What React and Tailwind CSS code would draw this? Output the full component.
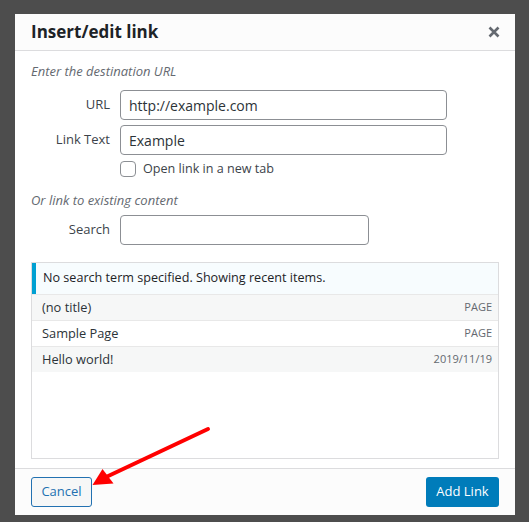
import React, { useState } from 'react'

const results = [
    { title: '(no title)', info: 'PAGE' },
    { title: 'Sample Page', info: 'PAGE' },
    { title: 'Hello world!', info: '2019/11/19' },
]

const Field = ({ label, value, width, onChange }) => (
    <div className="flex items-center h-[30px]">
        <label className="w-[79px] text-right text-[13px] text-[#3c434a]">{label}</label>
        <input
            type="text"
            value={value}
            onChange={(e) => onChange(e.target.value)}
            className={`ml-[10px] h-[30px] ${width} rounded-[4px] border border-[#8c8f94] bg-white px-[8px] text-[14px] text-[#2c3338] outline-none`}
        />
    </div>
)

const App = () => {
    const [url, setUrl] = useState('http://example.com')
    const [text, setText] = useState('Example')
    const [search, setSearch] = useState('')
    const [newTab, setNewTab] = useState(false)

    return (
        <div className="relative h-[522px] w-[529px] bg-[#4d4d4d] pl-[15px] pt-[14px] font-['Open_Sans',sans-serif]">
            <div className="flex h-[501px] w-[500px] flex-col bg-white">
                <div className="flex h-[37px] items-center justify-between border-b border-[#dcdcde] bg-[#fcfcfc] pl-[16px] pr-[13px]">
                    <h1 className="text-[17px] font-bold text-[#1d2327]">Insert/edit link</h1>
                    <button aria-label="Close" className="p-[2px]">
                        <svg width="12" height="12" viewBox="0 0 12 12">
                            <path d="M1.5 1.5 L10.5 10.5 M10.5 1.5 L1.5 10.5" stroke="#646970" strokeWidth="2.6" strokeLinecap="butt" />
                        </svg>
                    </button>
                </div>

                <div className="flex flex-1 flex-col px-[16px]">
                    <p className="mt-[10px] text-[13px] leading-[20px] italic text-[#646970]">Enter the destination URL</p>
                    <div className="mt-[9px]">
                        <Field label="URL" value={url} width="w-[327px]" onChange={setUrl} />
                    </div>
                    <div className="mt-[5px]">
                        <Field label="Link Text" value={text} width="w-[327px]" onChange={setText} />
                    </div>
                    <label className="mt-[6px] ml-[89px] flex h-[16px] items-center text-[12.6px] text-[#3c434a]">
                        <input
                            type="checkbox"
                            checked={newTab}
                            onChange={() => setNewTab(!newTab)}
                            className="h-[16px] w-[16px] appearance-none rounded-[4px] border border-[#8c8f94] bg-white"
                        />
                        <span className="ml-[7px]">Open link in a new tab</span>
                    </label>

                    <p className="mt-[13px] text-[13px] leading-[20px] italic text-[#646970]">Or link to existing content</p>
                    <div className="mt-[5px]">
                        <Field label="Search" value={search} width="w-[249px]" onChange={setSearch} />
                    </div>

                    <div className="mt-[17px] h-[197px] border border-[#dcdcde] bg-white">
                        <div className="flex h-[31px] items-center border-l-4 border-[#00a0d2] bg-[#f7fcfe] pl-[7px] text-[12.6px] text-[#1d2327]">
                            No search term specified. Showing recent items.
                        </div>
                        {results.map((item, i) => (
                            <div
                                key={item.title}
                                className={`flex h-[26px] items-center justify-between border-t border-[#e8e8e8] pl-[10px] pr-[6px] ${i % 2 === 0 ? 'bg-[#f6f7f7]' : 'bg-white'}`}
                            >
                                <span className="text-[12.8px] text-[#2c3338]">{item.title}</span>
                                <span className="text-[11px] text-[#646970]">{item.info}</span>
                            </div>
                        ))}
                    </div>
                </div>

                <div className="flex h-[47px] items-start justify-between border-t border-[#dcdcde] bg-[#fcfcfc] px-[16px] pt-[8px]">
                    <button className="h-[30px] w-[61px] rounded-[3px] border border-[#2271b1] bg-[#f6f7f7] text-[13px] text-[#2271b1]">
                        Cancel
                    </button>
                    <button className="h-[30px] w-[73px] rounded-[3px] bg-[#007cba] text-[13px] text-white">
                        Add Link
                    </button>
                </div>
            </div>

            <svg className="pointer-events-none absolute left-0 top-0" width="529" height="522">
                <line x1="208" y1="429" x2="104" y2="478" stroke="#f00" strokeWidth="4" strokeLinecap="round" />
                <polygon points="92.5,485 102.5,469 113.5,483.5" fill="#f00" />
            </svg>
        </div>
    )
}

export default App
